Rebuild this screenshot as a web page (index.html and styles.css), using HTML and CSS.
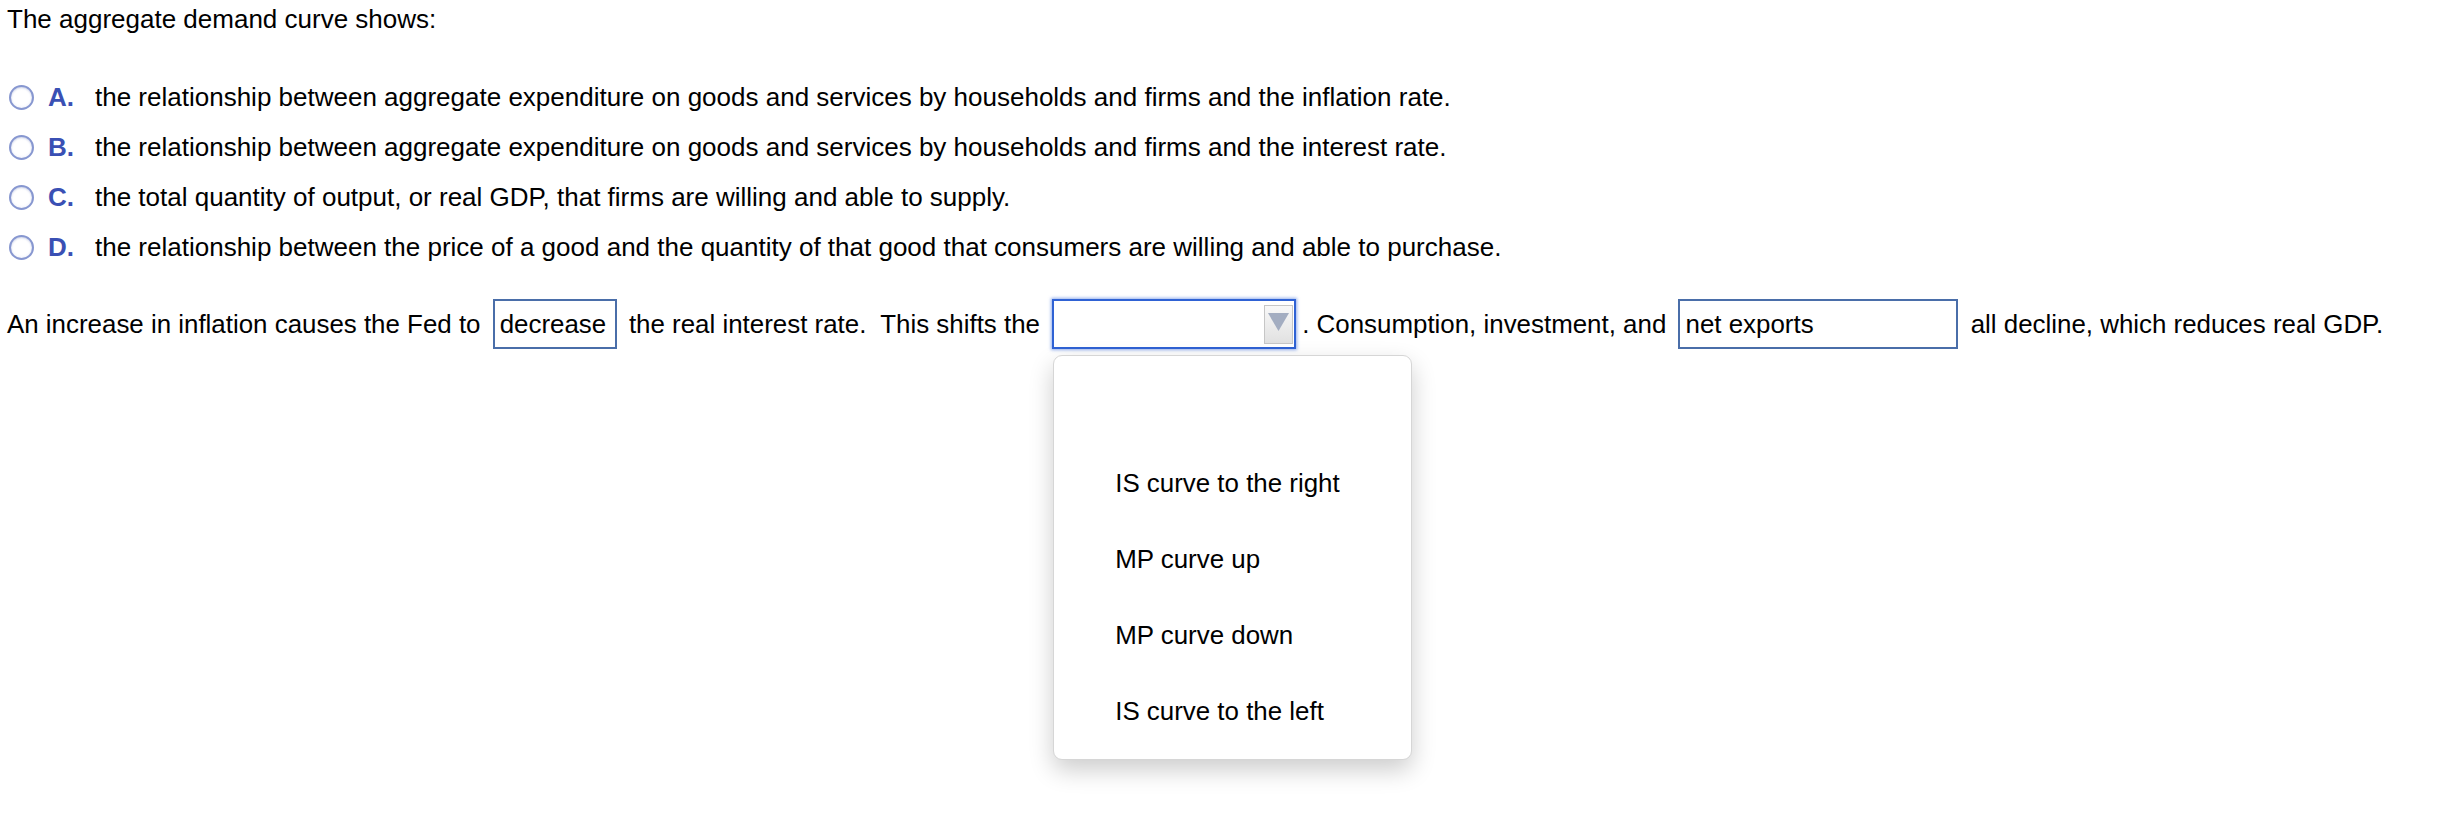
FILE: index.html
```html
<!DOCTYPE html>
<html lang="en">
<head>
<meta charset="utf-8">
<title>Aggregate demand question</title>
<link rel="stylesheet" href="styles.css">
</head>
<body>
<div class="page">
  <p class="question">The aggregate demand curve shows:</p>
  <ul class="choices">
    <li class="choice"><span class="radio"></span><span class="letter">A.</span><span class="choice-text">the relationship between aggregate expenditure on goods and services by households and firms and the inflation rate.</span></li>
    <li class="choice"><span class="radio"></span><span class="letter">B.</span><span class="choice-text">the relationship between aggregate expenditure on goods and services by households and firms and the interest rate.</span></li>
    <li class="choice"><span class="radio"></span><span class="letter">C.</span><span class="choice-text">the total quantity of output, or real GDP, that firms are willing and able to supply.</span></li>
    <li class="choice"><span class="radio"></span><span class="letter">D.</span><span class="choice-text">the relationship between the price of a good and the quantity of that good that consumers are willing and able to purchase.</span></li>
  </ul>
  <div class="fill">An increase in inflation causes the Fed to <span class="answer answer-short">decrease</span> the real interest rate.&nbsp; This shifts the <span class="select-wrap"><span class="select"><span class="select-btn"><svg class="caret" width="21" height="18" viewBox="0 0 21 18"><polygon points="0,0 21,0 10.5,18" fill="#a3adc1"/></svg></span></span><span class="menu"><span class="menu-item">&nbsp;</span><span class="menu-item">IS curve to the right</span><span class="menu-item">MP curve up</span><span class="menu-item">MP curve down</span><span class="menu-item">IS curve to the left</span></span></span>. Consumption, investment, and <span class="answer answer-long">net exports</span> all decline, which reduces real GDP.</div>
</div>
</body>
</html>
```

FILE: styles.css
```css
html, body {
  margin: 0;
  padding: 0;
  background: #ffffff;
}

body {
  font-family: "Liberation Sans", Arial, sans-serif;
  font-size: 26px;
  color: #000000;
}

.page {
  min-height: 820px;
  padding: 1px 7px 0;
}

.question {
  margin: 0;
  line-height: 36px;
}

.choices {
  list-style: none;
  margin: 35px 0 0;
  padding: 0;
}

.choice {
  display: flex;
  align-items: center;
  height: 50px;
  white-space: nowrap;
}

.radio {
  box-sizing: border-box;
  width: 25px;
  height: 25px;
  margin-left: 2px;
  margin-right: 14px;
  border-radius: 50%;
  border: 2.5px solid #8797d0;
  background: radial-gradient(circle at 50% 40%, #ffffff 55%, #eef1fa 100%);
  box-shadow: inset 0 1px 2px rgba(90, 110, 180, 0.3);
  flex: none;
}

.letter {
  width: 47px;
  font-weight: bold;
  color: #3a50b4;
  flex: none;
}

.fill {
  margin: 27px 0 0;
  font-size: 25.9px;
  line-height: 50px;
  white-space: nowrap;
}

.answer {
  display: inline-block;
  vertical-align: top;
  box-sizing: border-box;
  height: 50px;
  line-height: 46px;
  border: 2px solid #4a6ea9;
  padding: 0 5px;
  margin: 0 5px;
}

.answer-short {
  width: 124px;
}

.answer-long {
  width: 280px;
}

.select-wrap {
  position: relative;
  display: inline-block;
  vertical-align: top;
  height: 50px;
  margin: 0 6px 0 5px;
}

.select {
  display: flex;
  justify-content: flex-end;
  align-items: center;
  box-sizing: border-box;
  width: 244px;
  height: 50px;
  padding-right: 1px;
  border: 2px solid #2f62d4;
  box-shadow: 0 0 3px 1px rgba(60, 110, 220, 0.55);
  background: #ffffff;
}

.select-btn {
  box-sizing: border-box;
  display: flex;
  justify-content: center;
  align-items: flex-start;
  width: 29px;
  height: 39px;
  padding-top: 7px;
  border: 1px solid #c6c6c6;
  background: linear-gradient(#f8f8f8, #e1e1e1);
}

.caret {
  display: block;
}

.menu {
  position: absolute;
  top: 56px;
  left: 1px;
  z-index: 10;
  display: block;
  box-sizing: border-box;
  width: 359px;
  height: 405px;
  padding: 13px 0 0 61px;
  background: #ffffff;
  border: 1px solid #d6d6d6;
  border-radius: 9px;
  box-shadow: 0 10px 24px rgba(0, 0, 0, 0.2);
  line-height: 76px;
  text-align: left;
}

.menu-item {
  display: block;
  height: 76px;
  color: #000000;
}
```
